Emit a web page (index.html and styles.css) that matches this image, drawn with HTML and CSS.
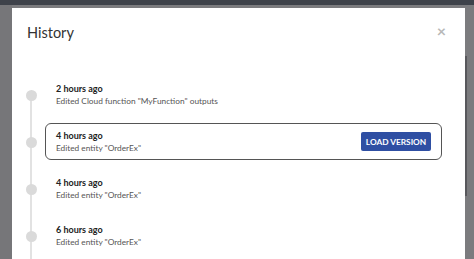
FILE: index.html
```html
<!DOCTYPE html>
<html lang="en">
<head>
    <meta charset="UTF-8">
    <title>History</title>
    <link rel="stylesheet" href="styles.css">
</head>
<body>
    <div class="topbar"></div>
    <div class="backdrop">
        <div class="gutter"></div>
        <div class="modal">
            <div class="modal-header">
                <h1>History</h1>
                <span class="close">&times;</span>
            </div>
            <div class="timeline">
                <div class="entry">
                    <span class="dot"></span>
                    <div class="entry-text">
                        <div class="entry-time">2 hours ago</div>
                        <div class="entry-desc">Edited Cloud function "MyFunction" outputs</div>
                    </div>
                </div>
                <div class="entry selected">
                    <span class="dot"></span>
                    <div class="entry-text">
                        <div class="entry-time">4 hours ago</div>
                        <div class="entry-desc">Edited entity "OrderEx"</div>
                    </div>
                    <button class="btn-load">LOAD VERSION</button>
                </div>
                <div class="entry">
                    <span class="dot"></span>
                    <div class="entry-text">
                        <div class="entry-time">4 hours ago</div>
                        <div class="entry-desc">Edited entity "OrderEx"</div>
                    </div>
                </div>
                <div class="entry">
                    <span class="dot"></span>
                    <div class="entry-text">
                        <div class="entry-time">6 hours ago</div>
                        <div class="entry-desc">Edited entity "OrderEx"</div>
                    </div>
                </div>
            </div>
        </div>
        <div class="gutter-right">
            <div class="thumb"></div>
        </div>
    </div>
</body>
</html>
```

FILE: styles.css
```css
* {
    margin: 0;
    padding: 0;
    box-sizing: border-box;
}

body {
    font-family: Lato, 'Open Sans', sans-serif;
    background: #7b7b7e;
    height: 259px;
    overflow: hidden;
    color: #333;
}

.topbar {
    height: 5px;
    background: #3e424a;
}

.backdrop {
    display: flex;
    height: 254px;
}

.gutter {
    width: 12px;
    background: #767679;
}

.modal {
    width: 453px;
    margin-top: 3px;
    background: #fff;
    overflow: hidden;
}

.modal-header {
    display: flex;
    justify-content: space-between;
    align-items: flex-start;
    padding: 16px 19px 0 15px;
    height: 68px;
}

.modal-header h1 {
    font-size: 14.5px;
    font-weight: 400;
    color: #333;
    line-height: 18px;
}

.close {
    font-size: 16px;
    font-weight: 700;
    line-height: 14px;
    color: #b8b8b8;
}

.timeline {
    position: relative;
    padding-left: 33px;
}

.timeline::before {
    content: '';
    position: absolute;
    left: 18px;
    top: 18px;
    bottom: -20px;
    width: 2px;
    background: #e2e2e2;
}

.entry {
    position: relative;
    display: flex;
    align-items: center;
    width: 397px;
    height: 37px;
    margin-bottom: 10px;
    padding: 0 10px;
    border: 1px solid transparent;
    border-radius: 6px;
}

.entry.selected {
    border-color: #555;
}

.dot {
    position: absolute;
    left: -20px;
    top: 50%;
    width: 11px;
    height: 11px;
    margin-top: -5px;
    border-radius: 50%;
    background: #dadada;
}

.entry-text {
    flex-grow: 1;
}

.entry-time {
    font-size: 9px;
    font-weight: 700;
    color: #222;
    line-height: 12px;
}

.entry-desc {
    font-size: 8.3px;
    color: #555;
    line-height: 12px;
}

.btn-load {
    background: #2f4fa3;
    color: #fff;
    border: none;
    border-radius: 2px;
    font-family: inherit;
    font-size: 8.3px;
    font-weight: 700;
    width: 70px;
    height: 19px;
}

.gutter-right {
    flex-grow: 1;
    padding-top: 51px;
}

.thumb {
    width: 2px;
    height: 140px;
    background: #58585c;
}
```
